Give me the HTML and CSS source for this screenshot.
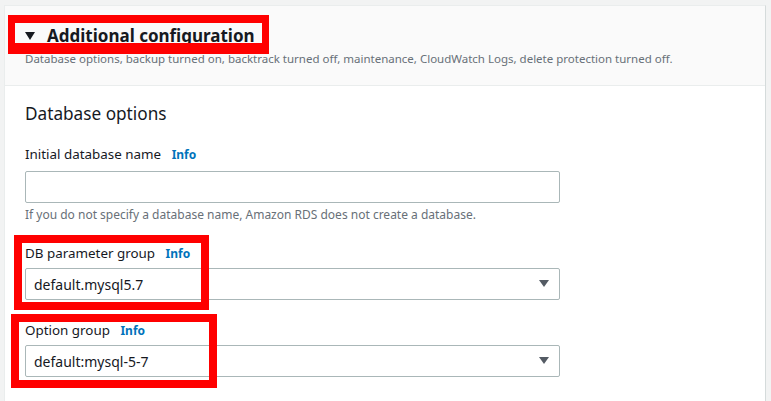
FILE: index.html
```html
<!DOCTYPE html>
<html>
<head>
<meta charset="utf-8">
<link rel="stylesheet" href="styles.css">
</head>
<body>
<div class="page">
  <section class="panel">
    <header class="panel-head">
      <h2 class="panel-title">
        <svg class="caret" width="10" height="8" viewBox="0 0 10 8"><path d="M0 0H10L5 8Z" fill="#16191f"/></svg>
        Additional configuration
      </h2>
      <p class="panel-desc">Database options, backup turned on, backtrack turned off, maintenance, CloudWatch Logs, delete protection turned off.</p>
    </header>
    <div class="panel-body">
      <h3 class="section-title">Database options</h3>
      <div class="field">
        <div class="label">Initial database name <a class="info">Info</a></div>
        <div class="input"></div>
        <div class="hint">If you do not specify a database name, Amazon RDS does not create a database.</div>
      </div>
      <div class="field">
        <div class="label">DB parameter group <a class="info">Info</a></div>
        <div class="select"><span>default.mysql5.7</span><svg width="10" height="8" viewBox="0 0 10 8"><path d="M0 0H10L5 7Z" fill="#545b64"/></svg></div>
      </div>
      <div class="field">
        <div class="label">Option group <a class="info">Info</a></div>
        <div class="select"><span>default:mysql-5-7</span><svg width="10" height="8" viewBox="0 0 10 8"><path d="M0 0H10L5 7Z" fill="#545b64"/></svg></div>
      </div>
    </div>
  </section>
  <div class="mark mark-1"></div>
  <div class="mark mark-2"></div>
  <div class="mark mark-3"></div>
</div>
</body>
</html>
```
FILE: styles.css
```css
html, body {
  margin: 0;
  padding: 0;
  background: #f2f3f3;
  font-family: "Noto Sans", "Open Sans", sans-serif;
  color: #16191f;
}
.page {
  position: relative;
  padding: 5px 5px 0 4px;
  height: 396px;
  overflow: hidden;
}
.panel {
  border: 1px solid #eaeded;
  border-right-color: #d5dbdb;
  border-bottom: none;
  background: #fff;
  height: 100%;
}
.panel-head {
  background: #fafafa;
  border-bottom: 1px solid #eaeded;
  padding: 19px 20px 18px 20px;
}
.panel-title {
  margin: 0;
  font-size: 17px;
  line-height: 22px;
  font-weight: 700;
  display: flex;
  align-items: center;
  gap: 12px;
}
.caret { flex: none; }
.panel-desc {
  margin: 4px 0 0 0;
  font-size: 11.5px;
  line-height: 16px;
  color: #687078;
}
.panel-body {
  padding: 16px 20px 0 20px;
}
.section-title {
  margin: 0 0 18px 0;
  font-size: 17.2px;
  line-height: 24px;
  font-weight: 400;
}
.field { margin-bottom: 20px; width: 535px; }
.label {
  font-size: 13.4px;
  line-height: 20px;
  margin-bottom: 6px;
}
.info {
  font-size: 12px;
  font-weight: 700;
  color: #0073bb;
  margin-left: 7px;
}
.input, .select {
  height: 30px;
  border: 1px solid #aab7b8;
  border-radius: 2px;
  background: #fff;
}
.select {
  margin-top: -2px;
  display: flex;
  align-items: center;
  justify-content: space-between;
  padding: 0 10px 0 8px;
  font-size: 14px;
}
.hint {
  margin-top: 4px;
  font-size: 12px;
  line-height: 16px;
  color: #687078;
}
.mark {
  position: absolute;
  border: 8px solid #ff0000;
  box-sizing: border-box;
}
.mark-1 { left: 8px; top: 15px; width: 261px; height: 39px; border-width: 8px 7px 11px 7px; }
.mark-2 { left: 14px; top: 235px; width: 195px; height: 75px; }
.mark-3 { left: 11px; top: 314px; width: 206px; height: 74px; }
```
